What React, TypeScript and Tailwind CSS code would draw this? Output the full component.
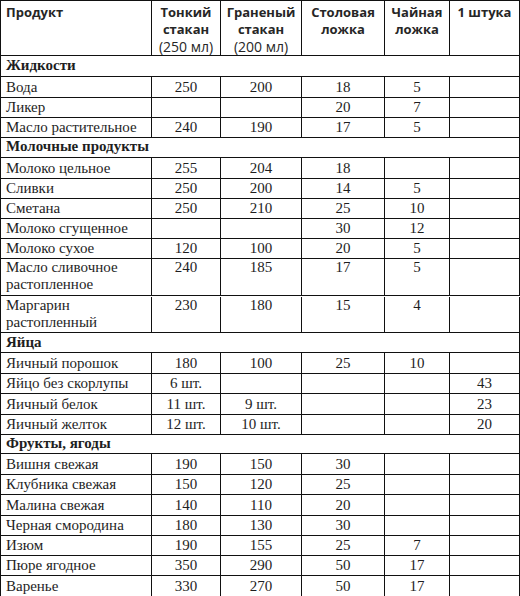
import React from "react";

type DataRow =
  | { kind: "section"; title: string; h: string }
  | { kind: "item"; lines: string[]; v: string[]; h: string };

const rows: DataRow[] = [
  { kind: "section", title: "Жидкости", h: "h-[21px]" },
  { kind: "item", lines: ["Вода"], v: ["250", "200", "18", "5", ""], h: "h-[20px]" },
  { kind: "item", lines: ["Ликер"], v: ["", "", "20", "7", ""], h: "h-[20px]" },
  { kind: "item", lines: ["Масло растительное"], v: ["240", "190", "17", "5", ""], h: "h-[20px]" },
  { kind: "section", title: "Молочные продукты", h: "h-[21px]" },
  { kind: "item", lines: ["Молоко цельное"], v: ["255", "204", "18", "", ""], h: "h-[20px]" },
  { kind: "item", lines: ["Сливки"], v: ["250", "200", "14", "5", ""], h: "h-[20px]" },
  { kind: "item", lines: ["Сметана"], v: ["250", "210", "25", "10", ""], h: "h-[20px]" },
  { kind: "item", lines: ["Молоко сгущенное"], v: ["", "", "30", "12", ""], h: "h-[20px]" },
  { kind: "item", lines: ["Молоко сухое"], v: ["120", "100", "20", "5", ""], h: "h-[20px]" },
  { kind: "item", lines: ["Масло сливочное", "растопленное"], v: ["240", "185", "17", "5", ""], h: "h-[38px]" },
  { kind: "item", lines: ["Маргарин", "растопленный"], v: ["230", "180", "15", "4", ""], h: "h-[37px]" },
  { kind: "section", title: "Яйца", h: "h-[20px]" },
  { kind: "item", lines: ["Яичный порошок"], v: ["180", "100", "25", "10", ""], h: "h-[20px]" },
  { kind: "item", lines: ["Яйцо без скорлупы"], v: ["6 шт.", "", "", "", "43"], h: "h-[21px]" },
  { kind: "item", lines: ["Яичный белок"], v: ["11 шт.", "9 шт.", "", "", "23"], h: "h-[20px]" },
  { kind: "item", lines: ["Яичный желток"], v: ["12 шт.", "10 шт.", "", "", "20"], h: "h-[20px]" },
  { kind: "section", title: "Фрукты, ягоды", h: "h-[20px]" },
  { kind: "item", lines: ["Вишня свежая"], v: ["190", "150", "30", "", ""], h: "h-[20px]" },
  { kind: "item", lines: ["Клубника свежая"], v: ["150", "120", "25", "", ""], h: "h-[21px]" },
  { kind: "item", lines: ["Малина свежая"], v: ["140", "110", "20", "", ""], h: "h-[20px]" },
  { kind: "item", lines: ["Черная смородина"], v: ["180", "130", "30", "", ""], h: "h-[20px]" },
  { kind: "item", lines: ["Изюм"], v: ["190", "155", "25", "7", ""], h: "h-[20px]" },
  { kind: "item", lines: ["Пюре ягодное"], v: ["350", "290", "50", "17", ""], h: "h-[21px]" },
  { kind: "item", lines: ["Варенье"], v: ["330", "270", "50", "17", ""], h: "h-[20px]" },
];

const grid = "grid grid-cols-[151px_69px_81px_83px_65px_70px]";
const cell = "border-r border-b border-[#111]";

function HeaderCell({ lines, sub, left }: { lines: string[]; sub?: string; left?: boolean }) {
  return (
    <div className={`${cell} pt-[3px] ${left ? "pl-[5px] text-left" : "text-center"}`}>
      {lines.map((l) => (
        <div key={l} className="text-[13px] leading-[17px] font-bold">
          {l}
        </div>
      ))}
      {sub && <div className="text-[14px] leading-[17px] font-normal">{sub}</div>}
    </div>
  );
}

export default function App() {
  return (
    <div className="w-[520px] h-[596px] bg-white overflow-hidden">
      <div className="w-[520px] border-l border-t border-[#111] text-[#1e1e1e]">
        <div className={`${grid} h-[55px] font-['Open_Sans',sans-serif] text-[#262626]`}>
          <HeaderCell lines={["Продукт"]} left />
          <HeaderCell lines={["Тонкий", "стакан"]} sub="(250 мл)" />
          <HeaderCell lines={["Граненый", "стакан"]} sub="(200 мл)" />
          <HeaderCell lines={["Столовая", "ложка"]} />
          <HeaderCell lines={["Чайная", "ложка"]} />
          <HeaderCell lines={["1 штука"]} />
        </div>
        {rows.map((r, i) =>
          r.kind === "section" ? (
            <div
              key={i}
              className={`${r.h} ${cell} pl-[5px] font-['Liberation_Serif',serif] font-bold text-[15px] leading-[19px]`}
            >
              {r.title}
            </div>
          ) : (
            <div
              key={i}
              className={`${grid} ${r.h} font-['Liberation_Serif',serif] text-[15px] ${
                r.lines.length > 1 ? "leading-[17px] pt-px" : "leading-[20px]"
              }`}
            >
              <div className={`${cell} pl-[5px]`}>
                {r.lines.map((l) => (
                  <div key={l}>{l}</div>
                ))}
              </div>
              {r.v.map((v, j) => (
                <div key={j} className={`${cell} text-center`}>
                  {v}
                </div>
              ))}
            </div>
          )
        )}
      </div>
    </div>
  );
}
